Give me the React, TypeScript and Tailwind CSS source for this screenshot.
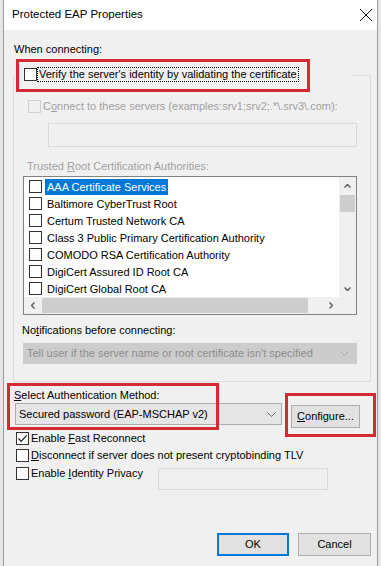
import React from 'react';

// Windows 10 "Protected EAP Properties" dialog with red annotation boxes

const certs = [
  'AAA Certificate Services',
  'Baltimore CyberTrust Root',
  'Certum Trusted Network CA',
  'Class 3 Public Primary Certification Authority',
  'COMODO RSA Certification Authority',
  'DigiCert Assured ID Root CA',
  'DigiCert Global Root CA',
];

function Box({ checked, disabled }: { checked?: boolean; disabled?: boolean }) {
  return (
    <span
      className={`flex h-[13px] w-[13px] shrink-0 items-center justify-center border ${
        disabled ? 'border-[#d0d0d0] bg-[#f0f0f0]' : 'border-[#333333] bg-white'
      }`}
    >
      {checked && (
        <svg width="11" height="11" viewBox="0 0 11 11">
          <path d="M1.5 5.5 L4.2 8.3 L9.6 2.4" fill="none" stroke="#1a1a1a" strokeWidth="1.2" />
        </svg>
      )}
    </span>
  );
}

function Chevron({ dir, color = '#606060', w = 7, h = 4, sw = 1.5 }: { dir: 'up' | 'down' | 'left' | 'right'; color?: string; w?: number; h?: number; sw?: number }) {
  const horiz = dir === 'left' || dir === 'right';
  const W = horiz ? h : w;
  const H = horiz ? w : h;
  let d = '';
  if (dir === 'down') d = `M0.5 0.5 L${W / 2} ${H - 0.5} L${W - 0.5} 0.5`;
  if (dir === 'up') d = `M0.5 ${H - 0.5} L${W / 2} 0.5 L${W - 0.5} ${H - 0.5}`;
  if (dir === 'right') d = `M0.5 0.5 L${W - 0.5} ${H / 2} L0.5 ${H - 0.5}`;
  if (dir === 'left') d = `M${W - 0.5} 0.5 L0.5 ${H / 2} L${W - 0.5} ${H - 0.5}`;
  return (
    <svg width={W} height={H} viewBox={`0 0 ${W} ${H}`}>
      <path d={d} fill="none" stroke={color} strokeWidth={sw} />
    </svg>
  );
}

export default function App() {
  return (
    <div className="relative flex h-[566px] w-[381px] overflow-hidden bg-[#e6e6e6] font-['Segoe_UI','Liberation_Sans',Arial,sans-serif] text-[11px] text-black">
      <div className="ml-[3px] flex h-full w-[375px] flex-col border-x border-[#9a9a9a] bg-[#f0f0f0]">
        {/* title bar */}
        <div className="flex h-[30px] shrink-0 items-center justify-between bg-white pl-[8px] pr-[4px]">
          <span className="text-[11.5px]">Protected EAP Properties</span>
          <svg width="14" height="14" viewBox="0 0 14 14">
            <path d="M1 1 L13 13 M13 1 L1 13" stroke="#111" strokeWidth="1" />
          </svg>
        </div>

        <div className="ml-[10px] mt-[11px] h-[16px] leading-[16px]">When connecting:</div>

        {/* group box */}
        <div className="ml-[9px] mt-[18px] w-[358px] border border-[#dcdcdc] pb-[17px]">
          <div className="-mt-[9px] flex h-[15px] w-[338px] items-center bg-[#f0f0f0] pl-[10px]">
            <Box />
            <span className="border border-dotted border-black px-[1px] leading-[13px]">
              <u className="no-underline underline-offset-2 [text-decoration-line:underline]">V</u>erify the server's identity by validating the certificate
            </span>
          </div>

          <div className="mt-[17px] flex h-[15px] items-center gap-[2px] pl-[14px] text-[#a0a0a0]">
            <Box disabled />
            <span>
              C<u>o</u>nnect to these servers (examples:srv1;srv2;.*\.srv3\.com):
            </span>
          </div>

          <div className="ml-[34px] mt-[9px] h-[24px] w-[309px] border border-[#d9d9d9] bg-[#f0f0f0]" />

          <div className="ml-[13px] mt-[11px] h-[16px] leading-[16px] text-[#a0a0a0]">
            Trusted <u>R</u>oot Certification Authorities:
          </div>

          {/* list box */}
          <div className="ml-[9px] mt-[2px] grid h-[139px] w-[334px] grid-cols-[315px_17px] grid-rows-[120px_17px] border border-[#828282] bg-white">
            <div className="overflow-hidden pt-[1px]">
              {certs.map((c, i) => (
                <div key={c} className="flex h-[17px] items-center whitespace-nowrap pl-[5px]">
                  <Box />
                  <span className={`ml-[3px] h-[16px] px-[2px] leading-[16px] ${i === 0 ? 'bg-[#0078d7] text-white' : ''}`}>{c}</span>
                </div>
              ))}
            </div>
            <div className="flex flex-col bg-[#f0f0f0]">
              <div className="flex h-[17px] items-center justify-center">
                <Chevron dir="up" />
              </div>
              <div className="mx-[1px] mt-[1px] h-[17px] bg-[#cdcdcd]" />
              <div className="flex-1" />
              <div className="flex h-[17px] items-center justify-center">
                <Chevron dir="down" />
              </div>
            </div>
            <div className="flex bg-[#f0f0f0]">
              <div className="flex w-[17px] items-center justify-center">
                <Chevron dir="left" />
              </div>
              <div className="my-[1px] ml-[1px] w-[266px] bg-[#cdcdcd]" />
              <div className="flex-1" />
              <div className="flex w-[17px] items-center justify-center">
                <Chevron dir="right" />
              </div>
            </div>
            <div className="bg-[#f0f0f0]" />
          </div>

          <div className="ml-[8px] mt-[7px] h-[16px] leading-[16px]">
            No<u>t</u>ifications before connecting:
          </div>

          <div className="ml-[9px] mt-[5px] flex h-[21px] w-[334px] items-center justify-between border border-[#cccccc] bg-[#cccccc] pl-[3px] pr-[7px] text-[#8d8d8d]">
            <span>Tell user if the server name or root certificate isn't specified</span>
            <Chevron dir="down" color="#a8a8a8" w={9} h={5} sw={1} />
          </div>
        </div>

        <div className="ml-[10px] mt-[5px] h-[16px] leading-[16px]">
          <u>S</u>elect Authentication Method:
        </div>

        <div className="flex items-start">
          <div className="ml-[11px] flex h-[22px] w-[267px] items-center justify-between border border-[#acacac] bg-[#e5e5e5] pl-[3px] pr-[5px]">
            <span>Secured password (EAP-MSCHAP v2)</span>
            <Chevron dir="down" color="#6a6a6a" w={9} h={5} sw={1} />
          </div>
          <div className="ml-[9px] mt-[2px] flex h-[23px] w-[69px] items-center justify-center border border-[#adadad] bg-[#e1e1e1]">
            <span>
              <u>C</u>onfigure...
            </span>
          </div>
        </div>

        <div className="ml-[12px] mt-[3px] flex h-[15px] items-center gap-[2px]">
          <Box checked />
          <span>
            Enable <u>F</u>ast Reconnect
          </span>
        </div>
        <div className="ml-[12px] mt-[2px] flex h-[15px] items-center gap-[2px]">
          <Box />
          <span>
            <u>D</u>isconnect if server does not present cryptobinding TLV
          </span>
        </div>
        <div className="ml-[12px] mt-[3px] flex items-start">
          <div className="flex h-[15px] w-[142px] items-center gap-[2px]">
            <Box />
            <span>
              Enable <u>I</u>dentity Privacy
            </span>
          </div>
          <div className="mt-[2px] h-[22px] w-[170px] border border-[#d9d9d9] bg-[#f0f0f0]" />
        </div>

        <div className="mt-[43px] flex justify-end gap-[9px] pr-[6px]">
          <div className="flex h-[23px] w-[72px] items-center justify-center border-2 border-[#0078d7] bg-[#e1e1e1]">OK</div>
          <div className="flex h-[23px] w-[73px] items-center justify-center border border-[#adadad] bg-[#e1e1e1]">Cancel</div>
        </div>
      </div>

      {/* red annotation boxes */}
      <div className="pointer-events-none absolute left-[16px] top-[59px] h-[33px] w-[294px] border-[3px] border-[#d42a36]" />
      <div className="pointer-events-none absolute left-[7px] top-[383px] h-[47px] w-[212px] border-[3px] border-[#d42a36]" />
      <div className="pointer-events-none absolute left-[285px] top-[393px] h-[44px] w-[91px] border-[3px] border-[#d42a36]" />
    </div>
  );
}
